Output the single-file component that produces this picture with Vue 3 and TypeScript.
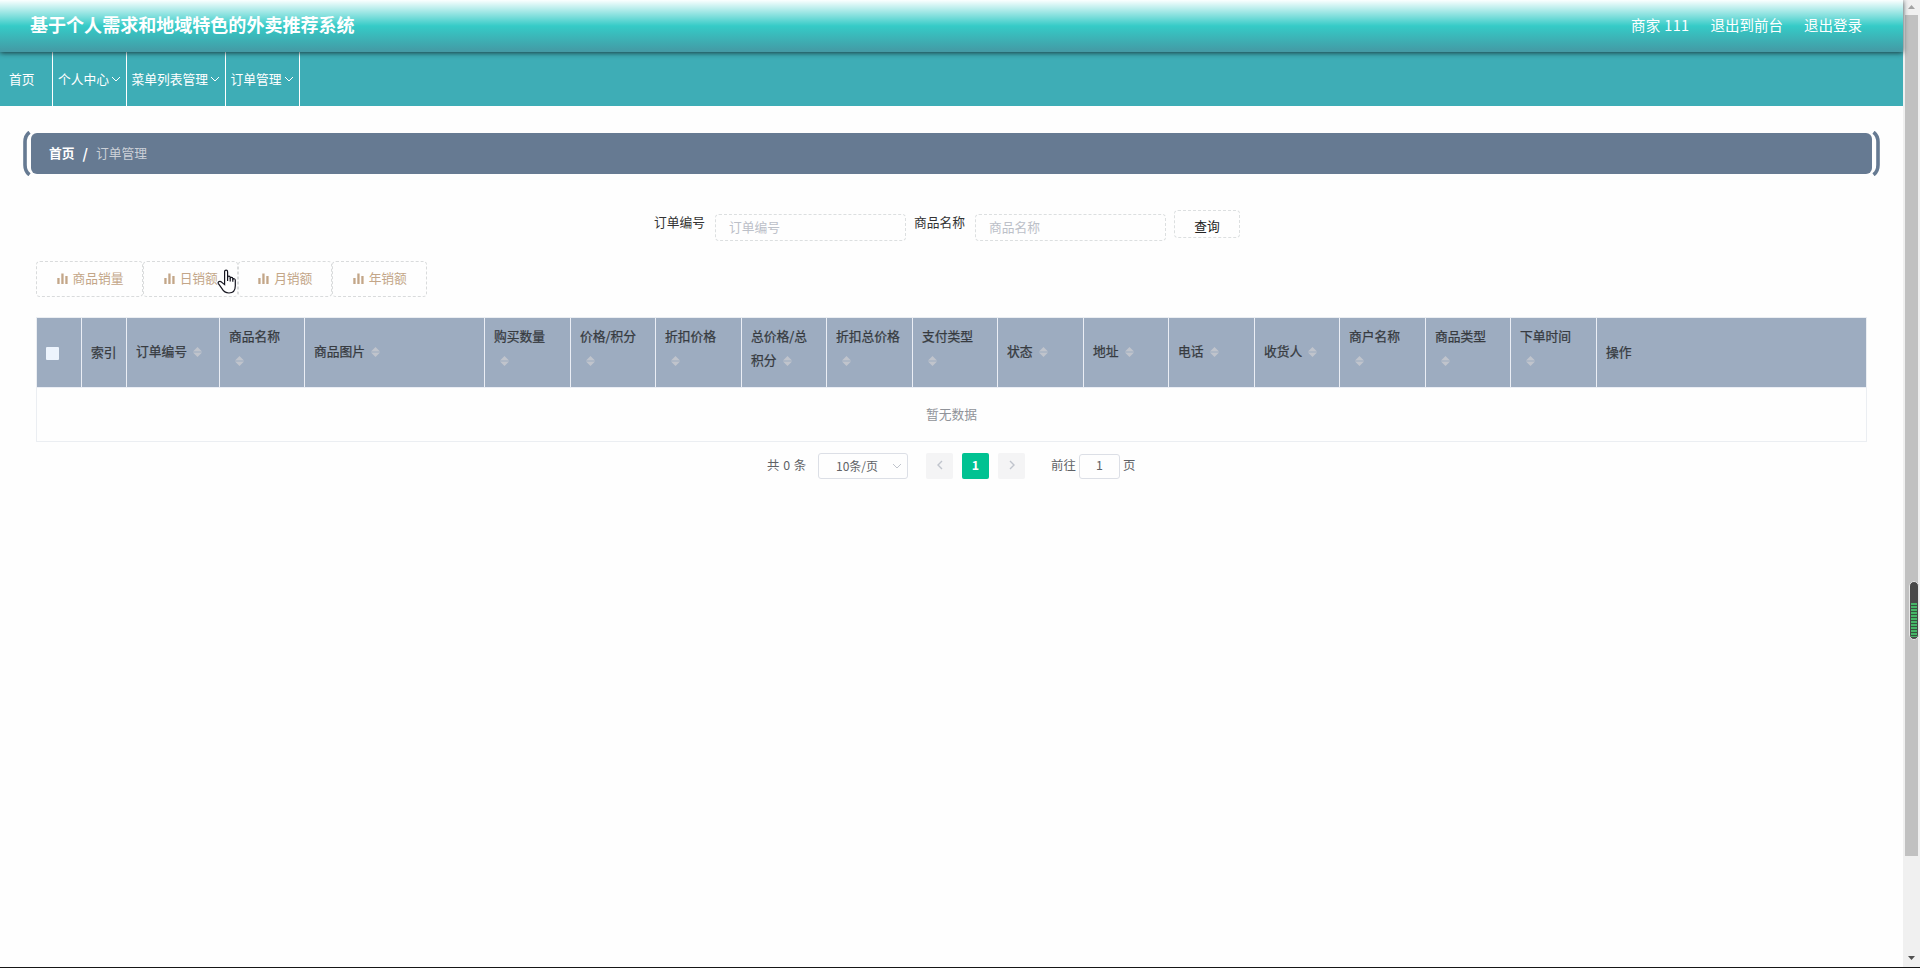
<script setup lang="ts">
interface Column {
  label: string
  sortable: boolean
  wraps?: boolean
}

const menus: { label: string; nested: boolean }[] = [
  { label: '首页', nested: false },
  { label: '个人中心', nested: true },
  { label: '菜单列表管理', nested: true },
  { label: '订单管理', nested: true },
]

const charts: string[] = ['商品销量', '日销额', '月销额', '年销额']

const columns: Column[] = [
  { label: '索引', sortable: false },
  { label: '订单编号', sortable: true },
  { label: '商品名称', sortable: true, wraps: true },
  { label: '商品图片', sortable: true },
  { label: '购买数量', sortable: true, wraps: true },
  { label: '价格/积分', sortable: true, wraps: true },
  { label: '折扣价格', sortable: true, wraps: true },
  { label: '总价格/总积分', sortable: true, wraps: true },
  { label: '折扣总价格', sortable: true, wraps: true },
  { label: '支付类型', sortable: true, wraps: true },
  { label: '状态', sortable: true },
  { label: '地址', sortable: true },
  { label: '电话', sortable: true },
  { label: '收货人', sortable: true },
  { label: '商户名称', sortable: true, wraps: true },
  { label: '商品类型', sortable: true, wraps: true },
  { label: '下单时间', sortable: true, wraps: true },
  { label: '操作', sortable: false },
]
</script>

<template>
  <div class="screen">
    <div class="page">
      <header class="header">
        <h1 class="title">基于个人需求和地域特色的外卖推荐系统</h1>
        <div class="account">
          <span class="user">商家 111</span>
          <span>退出到前台</span>
          <span>退出登录</span>
        </div>
      </header>

      <nav class="nav">
        <div v-for="menu in menus" :key="menu.label" class="nav-item">
          <span>{{ menu.label }}</span>
          <svg v-if="menu.nested" class="chevron" viewBox="0 0 10 10">
            <path d="M1 3L5 7L9 3" />
          </svg>
        </div>
      </nav>

      <div class="crumb-row">
        <svg class="bracket" viewBox="0 0 8 45">
          <path d="M6.5 1.2C3.5 3.5 2 6.5 2 11V34C2 38.5 3.5 41.5 6.5 43.8" />
        </svg>
        <div class="crumb">
          <b>首页</b><b class="slash">/</b><span>订单管理</span>
        </div>
        <svg class="bracket" viewBox="0 0 8 45">
          <path d="M1.5 1.2C4.5 3.5 6 6.5 6 11V34C6 38.5 4.5 41.5 1.5 43.8" />
        </svg>
      </div>

      <form class="search" @submit.prevent>
        <label>订单编号</label>
        <input class="field" placeholder="订单编号" />
        <label>商品名称</label>
        <input class="field" placeholder="商品名称" />
        <button class="query">查询</button>
      </form>

      <div class="charts">
        <button v-for="chart in charts" :key="chart" class="chart-btn">
          <svg class="bars" viewBox="0 0 11 11">
            <path d="M0.3 5h2.3v6H0.3zM4.3 0.5h2.3V11H4.3zM8.3 3h2.3v8H8.3z" />
          </svg>
          <span>{{ chart }}</span>
        </button>
      </div>

      <div class="table">
        <div class="thead">
          <div class="cell"><i class="checkbox"></i></div>
          <div v-for="column in columns" :key="column.label" class="cell">
            <div class="cell-text" :class="{ sortable: column.sortable, wraps: column.wraps }">
              {{ column.label }}<svg v-if="column.sortable" class="caret" viewBox="0 0 9 10">
                <path d="M4.5 0L9 4.4H0zM0 5.6H9L4.5 10z" />
              </svg>
            </div>
          </div>
        </div>
        <div class="empty">暂无数据</div>
      </div>

      <div class="pager">
        <span class="total">共 0 条</span>
        <div class="size">
          <span>10条/页</span>
          <svg viewBox="0 0 10 10"><path d="M1 3L5 7L9 3" /></svg>
        </div>
        <div class="step">
          <svg viewBox="0 0 10 10"><path d="M7 1L3 5L7 9" /></svg>
        </div>
        <div class="step current">1</div>
        <div class="step">
          <svg viewBox="0 0 10 10"><path d="M3 1L7 5L3 9" /></svg>
        </div>
        <span class="goto">前往</span>
        <div class="jump">1</div>
        <span>页</span>
      </div>
    </div>

    <aside class="scrollbar">
      <svg class="arrow" viewBox="0 0 17 15"><path d="M5 9L8.5 5L12 9z" fill="#a3a3a3" /></svg>
      <div class="thumb"></div>
      <svg class="arrow" viewBox="0 0 17 15"><path d="M5 4L8.5 8L12 4z" fill="#505050" /></svg>
    </aside>

    <div class="meter"><div class="level"></div></div>

    <svg class="pointer" viewBox="0 0 20 25">
      <path
        d="M7.6 15.6V2.8C7.6 0.5 10.6 0.5 10.6 2.8V8.4C10.6 6.6 13.2 6.8 13.2 8.6V9.4C13.4 7.9 15.8 8.2 15.8 9.8V10.5C16.2 9.2 18.3 9.6 18.3 11.2V16.8C18.3 21.5 16 24 12 24C8.5 24 6.6 22.6 4.8 19.4L1.4 14.6C0.5 13.2 2.2 11.8 3.8 12.6Z"
      />
      <path d="M10.6 8V12M13.2 9V12.4M15.8 10V12.8" />
    </svg>
  </div>
</template>

<style>
body {
  overflow: hidden;
}
</style>

<style scoped>
.screen {
  position: relative;
  box-sizing: border-box;
  display: flex;
  width: 1920px;
  height: 968px;
  border-bottom: 1px solid #161616;
  background: #fefefe;
  color: #333;
  font-family: 'Noto Sans CJK SC', sans-serif;
  font-size: 12.75px;
}

.screen *,
.screen *::before {
  box-sizing: border-box;
}

button,
input {
  padding: 0;
  background: transparent;
  font: inherit;
}

svg {
  flex: none;
}

.page {
  width: 1903px;
}

.header {
  position: relative;
  display: flex;
  align-items: center;
  justify-content: space-between;
  height: 52px;
  padding: 0 41px 3px 30px;
  background: linear-gradient(180deg, #fbffff 0%, #35cbc7 50%, #4499a4 100%);
  box-shadow: 0 1px 5px rgba(20, 40, 45, 0.85);
  color: #fff;
}

.title {
  margin: 0;
  font-size: 18.05px;
  font-weight: 700;
  line-height: 49px;
}

.account {
  display: flex;
  gap: 21px;
  padding-bottom: 1px;
  font-size: 14.5px;
}

.user {
  letter-spacing: 0.35px;
}

.nav {
  display: flex;
  height: 54px;
  background: #3eadb6;
  color: #fff;
}

.nav-item {
  display: flex;
  align-items: center;
  height: 54px;
  padding: 0 5px 2px;
  border-right: 1px solid #fff;
}

.nav-item:first-child {
  width: 53px;
  padding-left: 9px;
}

.nav-item:nth-child(n + 3) {
  padding-left: 4.5px;
}

.chevron {
  width: 10px;
  height: 10px;
  margin: 1px 0 0 2px;
  fill: none;
  stroke: #fff;
}

.crumb-row {
  display: flex;
  align-items: center;
  height: 45px;
  margin: 25px 23px 0;
}

.bracket {
  width: 8px;
  height: 45px;
  fill: none;
  stroke: #667a92;
  stroke-width: 3.6;
}

.crumb {
  display: flex;
  flex: 1;
  align-items: center;
  height: 41px;
  padding: 0 0 2px 18px;
  border-radius: 6px;
  background: #667a92;
  color: #fff;
}

.slash {
  margin: 0 8px;
  font-size: 14px;
}

.crumb span {
  color: #cbd0d7;
}

.search {
  display: flex;
  height: 31px;
  margin: 34px 0 0 654px;
}

.search label {
  height: 26px;
  line-height: 24px;
}

.field {
  width: 191px;
  height: 27px;
  margin: 4px 8px 0 10px;
  padding: 0 13px 3px;
  border: 1px dashed #dcdfe0;
  border-radius: 4px;
  outline: none;
}

.field::placeholder {
  color: #bcc0c8;
}

.query {
  width: 66px;
  height: 28px;
  padding-top: 3px;
  border: 1px dashed #dcdfe0;
  border-radius: 4px;
  color: #222;
  line-height: 20px;
}

.charts {
  display: flex;
  height: 36px;
  margin: 20px 0 0 36px;
}

.chart-btn {
  display: flex;
  align-items: center;
  justify-content: center;
  gap: 5px;
  width: 94.5px;
  padding: 0 0 3px 1px;
  border: 1px dashed #d9dbdc;
  border-radius: 4px;
  color: #c3a688;
}

.chart-btn:first-child {
  width: 107px;
}

.bars {
  width: 11px;
  height: 11px;
  margin-top: 1px;
  fill: #c3a688;
}

.table {
  width: 1831px;
  height: 125px;
  margin: 20px 0 0 36px;
  border: 1px solid #ebeef2;
}

.thead {
  display: grid;
  grid-template-columns: 45px 45px 93px 85px 180px repeat(6, 86px 85px) 86px 269px;
  height: 70px;
  border-bottom: 1px solid #ebeef5;
  background: #9dacc0;
}

.cell {
  display: flex;
  align-items: center;
  padding: 0 9px;
  border-right: 1px solid #ebeef5;
  color: #373b40;
}

.cell:last-child {
  border-right: 0;
}

.cell-text {
  padding-bottom: 2px;
  line-height: 24px;
  -webkit-text-stroke: 0.25px #373b40;
}

.cell-text.sortable {
  padding-bottom: 4px;
}

.cell-text.wraps {
  padding-bottom: 9px;
}

.checkbox {
  width: 13px;
  height: 13px;
  margin-top: 2px;
  border-radius: 1px;
  background: #edf4fd;
}

.caret {
  width: 9px;
  height: 10px;
  margin: 0 6px;
  vertical-align: -1px;
  fill: #c0c4cc;
  -webkit-text-stroke: 0;
}

.empty {
  height: 53px;
  color: #909399;
  line-height: 51px;
  text-align: center;
}

.pager {
  display: flex;
  align-items: center;
  height: 27px;
  margin: 10px 0 0 767px;
  color: #606266;
  font-size: 12.4px;
}

.pager span {
  padding-bottom: 2px;
}

.total {
  width: 51px;
  word-spacing: 1px;
}

.size {
  display: flex;
  align-items: center;
  justify-content: space-between;
  width: 90px;
  height: 26px;
  margin-right: 18px;
  padding: 0 5px 0 17px;
  border: 1px solid #dcdfe6;
  border-radius: 3px;
  font-size: 12px;
}

.size span {
  padding-bottom: 1px;
}

.pager svg {
  width: 10px;
  height: 10px;
  fill: none;
  stroke: #c0c4cc;
}

.step {
  display: flex;
  align-items: center;
  justify-content: center;
  width: 27px;
  height: 26px;
  margin-right: 9px;
  padding-bottom: 1px;
  border-radius: 2px;
  background: #f4f4f5;
}

.pager .step svg {
  stroke-width: 1.4;
}

.current {
  background: #00c292;
  color: #fff;
  font-weight: 700;
}

.goto {
  width: 28px;
  margin-left: 17px;
}

.jump {
  width: 41px;
  height: 25px;
  margin: 1px 3px 0 0;
  border: 1px solid #dcdfe6;
  border-radius: 3px;
  line-height: 20px;
  text-align: center;
}

.scrollbar {
  display: flex;
  flex-direction: column;
  width: 17px;
  height: 967px;
  background: #f0f0f0;
}

.arrow {
  width: 17px;
  height: 15px;
}

.thumb {
  width: 13px;
  height: 841px;
  margin: 0 2px auto;
  background: #c1c1c1;
}

.meter {
  position: absolute;
  top: 581px;
  left: 1909px;
  width: 10px;
  height: 59px;
  padding: 21px 1px 2px;
  border: 1px solid #e6e6e6;
  border-radius: 5px;
  background: #484848;
}

.level {
  height: 34px;
  background: repeating-linear-gradient(180deg, #46b567 0 2px, #35553d 2px 3px);
}

.pointer {
  position: absolute;
  top: 269px;
  left: 217px;
  width: 20px;
  height: 25px;
  fill: #fff;
  stroke: #15151f;
  stroke-width: 1.2;
}
</style>
